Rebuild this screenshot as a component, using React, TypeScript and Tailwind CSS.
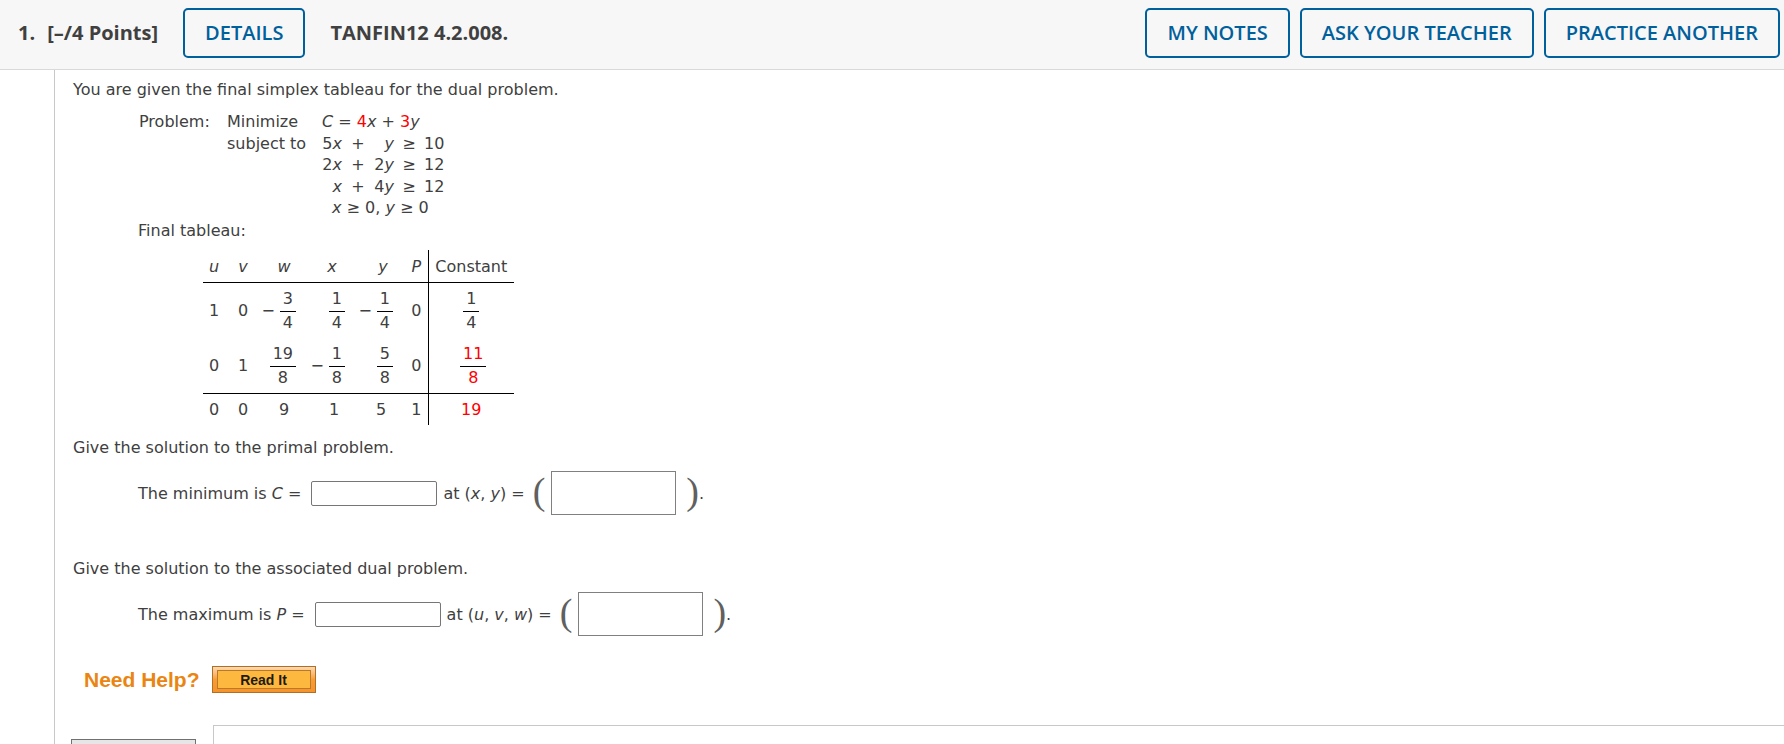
import React from 'react'

const headerButton =
  'h-[50px] rounded-[5px] border-2 border-[#00609c] bg-transparent px-5 text-[20px] font-semibold whitespace-nowrap text-[#00609c]'

// constraints of the primal problem: x term, y term, right side
const constraints = [
  { id: 1, x: '5', y: '', value: '10' },
  { id: 2, x: '2', y: '2', value: '12' },
  { id: 3, x: '', y: '4', value: '12' },
]

type FractionProps = { top: string; bottom: string; negative?: boolean }

const Fraction: React.FC<FractionProps> = ({ top, bottom, negative }) => (
  <span className="inline-flex items-center">
    {negative && <span className="mr-[5px]">−</span>}
    <span className="inline-flex flex-col text-center leading-[21px]">
      <span className="border-b border-black px-[3px] pb-[2px]">{top}</span>
      <span>{bottom}</span>
    </span>
  </span>
)

type AnswerProps = { id: string; title: string; name: string; vars: string[] }

const AnswerRow: React.FC<AnswerProps> = ({ id, title, name, vars }) => (
  <div className="mt-3 ml-[65px] flex h-11 items-center whitespace-nowrap">
    <label htmlFor={`${id}-value`} className="pt-[2px]">
      {title} <i>{name}</i> =
    </label>
    <input id={`${id}-value`} type="text" className="mr-[6px] ml-[10px] h-[25px] w-[126px] rounded-[2px] border border-[#767676] bg-white px-1" />
    <label htmlFor={`${id}-point`} className="pt-[2px]">
      at (
      {vars.map((v, i) => (
        <React.Fragment key={v}>
          {i > 0 && ', '}
          <i>{v}</i>
        </React.Fragment>
      ))}
      ) =
    </label>
    <span className="ml-2 pb-1 font-['Liberation_Serif',serif] text-[38px] leading-[40px] text-[#606060]">(</span>
    <input id={`${id}-point`} type="text" className="ml-[6px] h-11 w-[125px] border border-[#808080] bg-white px-1" />
    <span className="ml-[10px] pb-1 font-['Liberation_Serif',serif] text-[38px] leading-[40px] text-[#606060]">)</span>
    <span className="pt-[2px]">.</span>
  </div>
)

const App: React.FC = () => {
  return (
    <div className="flex h-screen flex-col overflow-hidden bg-white font-['DejaVu_Sans',sans-serif] text-[16px] leading-[22px] text-[#404040]">
      <header className="flex h-[70px] shrink-0 items-start border-b border-[#d9d9d9] bg-[#f7f7f7] pt-2 pr-1 pl-[18px] font-['Open_Sans',sans-serif]">
        <h1 className="flex h-[50px] items-center gap-3 text-[20px] font-bold whitespace-nowrap">
          <span>1.</span>
          <span>[–/4 Points]</span>
        </h1>
        <button type="button" className={`${headerButton} ml-[25px]`}>DETAILS</button>
        <h2 className="ml-[25px] flex h-[50px] items-center text-[20px] font-bold whitespace-nowrap">TANFIN12 4.2.008.</h2>
        <div className="ml-auto flex gap-[10px]">
          <button type="button" className={headerButton}>MY NOTES</button>
          <button type="button" className={headerButton}>ASK YOUR TEACHER</button>
          <button type="button" className={headerButton}>PRACTICE ANOTHER</button>
        </div>
      </header>

      <main className="ml-[54px] flex-1 overflow-hidden border-l border-[#c8c8c8] pt-[9px] pl-[18px]">
        <p>You are given the final simplex tableau for the dual problem.</p>

        {/* problem statement */}
        <div className="mt-[10px] ml-[66px] grid h-[108px] grid-cols-[88px_95px_1fr] grid-rows-5 leading-[21px] whitespace-nowrap">
          <span>Problem:</span>
          <span>Minimize</span>
          <span>
            <i>C</i> = <span className="text-[#ff0000]">4</span><i>x</i> + <span className="text-[#ff0000]">3</span><i>y</i>
          </span>
          {constraints.map((c) => (
            <React.Fragment key={c.id}>
              <span className="col-start-2">{c.id === 1 && 'subject to'}</span>
              <span className="flex">
                <span className="w-5 text-right">{c.x}<i>x</i></span>
                <span className="w-8 text-center">+</span>
                <span className="w-5 text-right">{c.y}<i>y</i></span>
                <span className="w-[30px] text-center">≥</span>
                <span>{c.value}</span>
              </span>
            </React.Fragment>
          ))}
          <span className="col-start-3 pl-[10px]">
            <i>x</i> ≥ 0, <i>y</i> ≥ 0
          </span>
        </div>

        <p className="mt-px ml-[65px]">Final tableau:</p>

        {/* final tableau */}
        <table className="mt-2 ml-[130px] w-[311px] table-fixed border-collapse text-center whitespace-nowrap [&_td]:pt-[2px] [&_th]:pt-[2px]">
          <colgroup>
            <col className="w-[22px]" />
            <col className="w-[36px]" />
            <col className="w-[46px]" />
            <col className="w-[50px]" />
            <col className="w-[48px]" />
            <col className="w-[23px]" />
            <col className="w-[86px]" />
          </colgroup>
          <thead>
            <tr className="h-8 border-b border-black">
              <th className="font-normal italic">u</th>
              <th className="font-normal italic">v</th>
              <th className="font-normal italic">w</th>
              <th className="font-normal italic">x</th>
              <th className="pl-1 font-normal italic">y</th>
              <th className="font-normal italic">P</th>
              <th className="border-l border-black font-normal">Constant</th>
            </tr>
          </thead>
          <tbody>
            <tr className="h-[55px]">
              <td>1</td>
              <td>0</td>
              <td className="pr-[11px] text-right"><Fraction top="3" bottom="4" negative /></td>
              <td className="pr-3 text-right"><Fraction top="1" bottom="4" /></td>
              <td className="pr-3 text-right"><Fraction top="1" bottom="4" negative /></td>
              <td>0</td>
              <td className="border-l border-black"><Fraction top="1" bottom="4" /></td>
            </tr>
            <tr className="h-[56px] border-b border-black">
              <td>0</td>
              <td>1</td>
              <td className="pr-[11px] text-right"><Fraction top="19" bottom="8" /></td>
              <td className="pr-3 text-right"><Fraction top="1" bottom="8" negative /></td>
              <td className="pr-3 text-right"><Fraction top="5" bottom="8" /></td>
              <td>0</td>
              <td className="border-l border-black pl-1 text-[#ff0000]"><Fraction top="11" bottom="8" /></td>
            </tr>
            <tr className="h-8">
              <td>0</td>
              <td>0</td>
              <td>9</td>
              <td className="pl-1">1</td>
              <td>5</td>
              <td>1</td>
              <td className="border-l border-black text-[#ff0000]">19</td>
            </tr>
          </tbody>
        </table>

        <p className="mt-3">Give the solution to the primal problem.</p>
        <AnswerRow id="primal" title="The minimum is" name="C" vars={['x', 'y']} />

        <p className="mt-[43px]">Give the solution to the associated dual problem.</p>
        <AnswerRow id="dual" title="The maximum is" name="P" vars={['u', 'v', 'w']} />

        <div className="mt-[30px] ml-[11px] flex h-[27px] items-center font-['Liberation_Sans',sans-serif] font-bold">
          <span className="text-[21px] text-[#ea8511]">Need Help?</span>
          <button type="button" className="ml-3 h-[27px] w-[104px] border border-[#b06f26] bg-linear-to-b from-[#fcd9b0] via-[#f99d33] to-[#f7922b] px-1 py-[3px]">
            <span className="flex h-[19px] items-center justify-center border border-[#b87a2a] bg-[#fdb93f] text-[14px] text-[#1f1a10]">Read It</span>
          </button>
        </div>

        <div className="mt-8 flex">
          <button type="button" aria-label="Submit" className="mt-[14px] -ml-[2px] h-[30px] w-[125px] border border-[#707070] bg-[#e6e6e6]" />
          <div className="ml-[17px] h-16 flex-1 border-t border-l border-[#c8c8c8]" />
        </div>
      </main>
    </div>
  )
}

export default App
